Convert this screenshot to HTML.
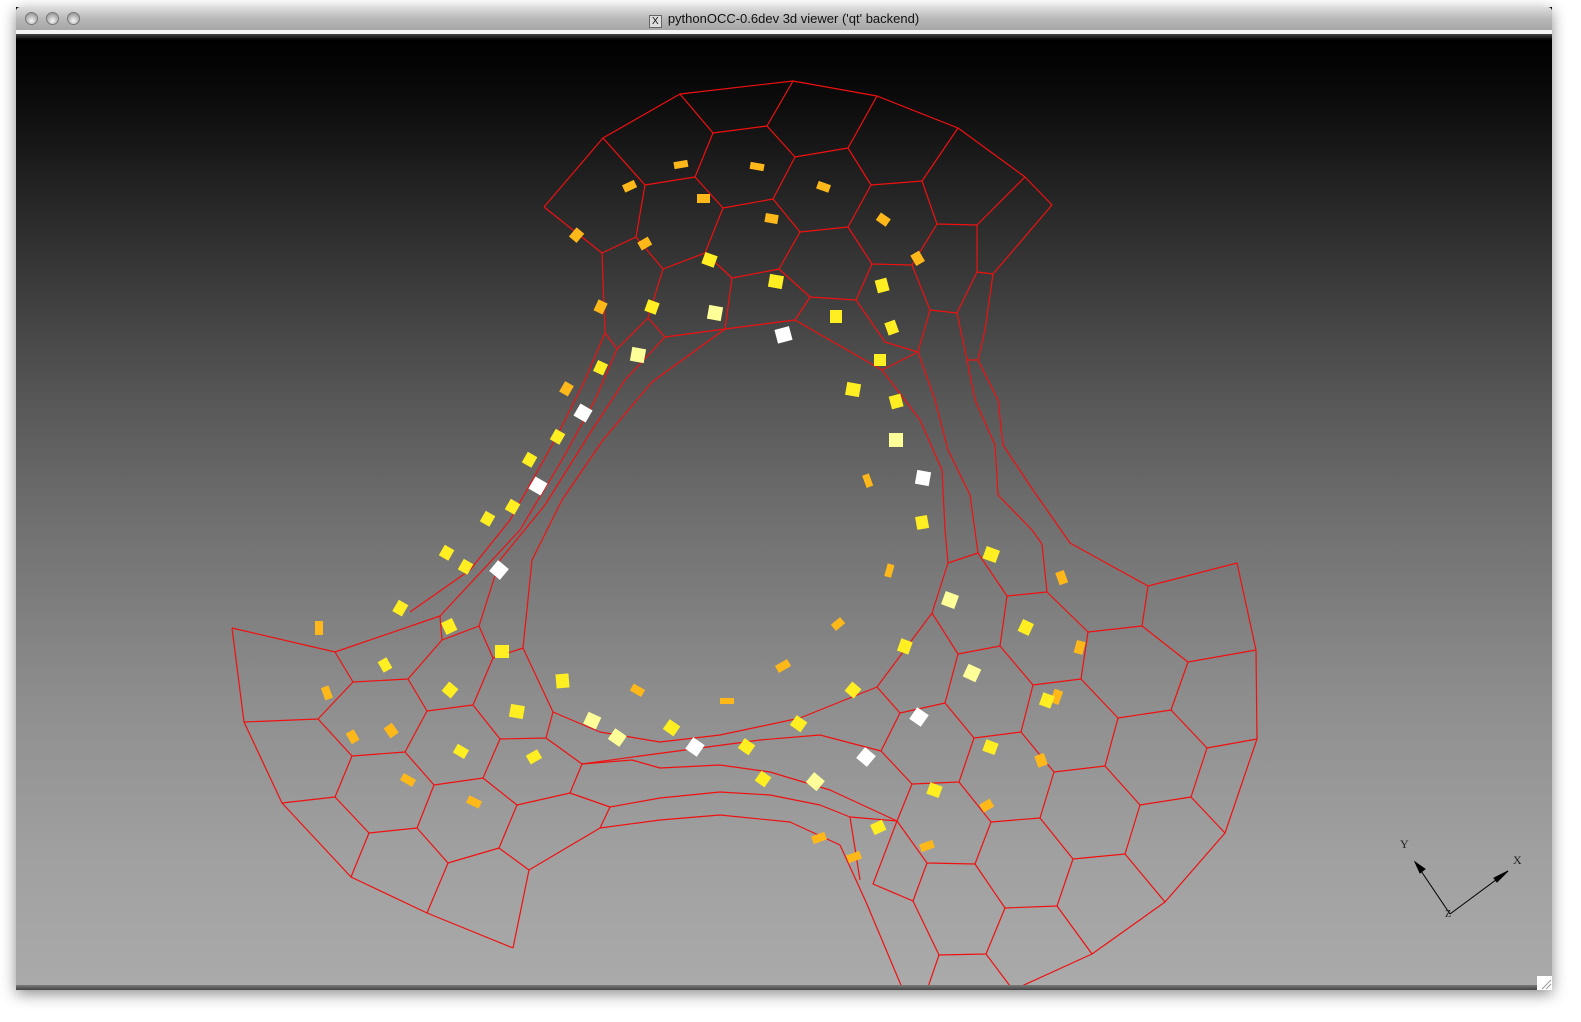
<!DOCTYPE html>
<html><head><meta charset="utf-8">
<style>
html,body{margin:0;padding:0;background:#fff;width:1581px;height:1022px;overflow:hidden;font-family:"Liberation Sans",sans-serif}
#win{position:absolute;left:16px;top:7px;width:1536px;height:983px;box-shadow:0 4px 14px rgba(0,0,0,.45);background:#000}
#tb{position:absolute;left:0;top:0;width:1536px;height:23px;background:linear-gradient(#dedede,#b9b9b9 50%,#a6a6a6);border-radius:4px 4px 0 0}
#wl{position:absolute;left:0;top:23px;width:1536px;height:4px;background:#f4f4f4}
#ds{position:absolute;left:0;top:27px;width:1536px;height:6px;background:linear-gradient(#444,#000)}
.btn{position:absolute;top:5px;width:13px;height:13px;border-radius:50%;background:radial-gradient(circle at 50% 70%,#f6f6f6,#b4b4b4 55%,#8a8a8a);border:1px solid #777;box-sizing:border-box}
#title{position:absolute;left:0;width:1536px;top:4px;text-align:center;font-size:13px;color:#111;font-family:"Liberation Sans","DejaVu Sans",sans-serif}
#vp{position:absolute;left:0;top:33px;width:1536px;height:945px;background:linear-gradient(#000 0%,#0b0b0b 6%,#262626 17%,#3f3f3f 27.5%,#575757 38%,#727272 52%,#8e8e8e 70%,#a0a0a0 86%,#aaa 100%)}
#bb{position:absolute;left:0;top:978px;width:1536px;height:5px;background:linear-gradient(#7a7a7a,#444)}
svg{position:absolute;left:0;top:0}
</style></head><body>
<div id="win">
<div id="tb">
<div class="btn" style="left:9px"></div><div class="btn" style="left:30px"></div><div class="btn" style="left:51px"></div>
<div id="title"><span style="display:inline-block;width:11px;height:11px;border:1px solid #666;background:#ddd;font-size:10px;line-height:11px;vertical-align:-1px;margin-right:6px">X</span>pythonOCC-0.6dev 3d viewer ('qt' backend)</div>
</div>
<div id="wl"></div><div id="ds"></div>
<div id="vp"></div>
<div id="bb"></div>
</div>
<svg width="1581" height="1022" viewBox="0 0 1581 1022">
<defs><clipPath id="c"><rect x="16" y="40" width="1536" height="945"/></clipPath></defs>
<g clip-path="url(#c)" fill="none" stroke="#f01010" stroke-width="1.2" stroke-linejoin="round">
<!-- left lobe -->
<polyline points="232,628 335,652 440,616"/>
<polyline points="232,628 244,722 282,803 351,877 427,913 513,948"/>
<polyline points="335,652 353,682 408,679 442,640 440,616"/>
<polyline points="442,640 479,626 493,658 473,705 427,711 408,679"/>
<polyline points="353,682 318,719 244,722"/>
<polyline points="318,719 352,756 405,752 427,711"/>
<polyline points="405,752 434,785 483,778 500,739 473,705"/>
<polyline points="493,658 523,648 553,712 546,738 500,739"/>
<polyline points="546,738 582,764 632,760"/>
<polyline points="352,756 335,797 282,803"/>
<polyline points="335,797 369,833 417,828 434,785"/>
<polyline points="483,778 517,805 570,793 582,764"/>
<polyline points="570,793 610,807"/>
<polyline points="417,828 448,863 499,848 517,805"/>
<polyline points="499,848 529,870 600,828 610,807"/>
<polyline points="369,833 351,877"/><polyline points="448,863 427,913"/><polyline points="529,870 513,948"/>
<!-- top cap -->
<polyline points="544,207 603,138 680,94 793,81 877,96 958,128 1025,177 1052,205 993,274"/>
<polyline points="680,94 713,133 767,126 793,81"/>
<polyline points="767,126 795,157 848,148 877,96"/>
<polyline points="848,148 871,185 922,181 958,128"/>
<polyline points="922,181 937,224 977,225 1025,177"/>
<polyline points="603,138 645,185 695,177 713,133"/>
<polyline points="695,177 723,208 773,199 795,157"/>
<polyline points="773,199 800,232 848,227 871,185"/>
<polyline points="848,227 872,264 912,265 937,224"/>
<polyline points="544,207 602,253 636,237 645,185"/>
<polyline points="636,237 663,269 705,253 723,208"/>
<polyline points="705,253 732,278 779,269 800,232"/>
<polyline points="779,269 810,297 856,300 872,264"/>
<polyline points="912,265 930,310 957,313 977,272 977,225"/>
<polyline points="977,272 993,274"/>
<polyline points="856,300 885,342 918,352 930,310"/>
<polyline points="810,297 795,320 725,329 732,278"/>
<polyline points="725,329 665,337 648,318 663,269"/>
<polyline points="648,318 617,349 605,333 602,253"/>
<!-- left arm -->
<polyline points="605,333 585,380 555,440 510,520 470,570 410,612"/>
<polyline points="617,349 595,400 562,460 520,530 440,616"/>
<polyline points="665,337 625,380 592,430 545,505 500,560 479,626"/>
<polyline points="725,329 652,382 603,440 562,500 532,560 523,648"/>
<!-- right arm -->
<polyline points="795,320 882,370 918,352"/>
<polyline points="882,370 920,420 942,470 945,530 948,563"/>
<polyline points="918,352 935,400 948,450 970,495 978,553"/>
<polyline points="957,313 967,360 975,400 995,445 998,495 1032,530 1042,544"/>
<polyline points="967,360 978,360 998,400 1003,445 1033,490 1070,543"/>
<polyline points="993,274 985,330 978,360"/>
<!-- right lobe -->
<polyline points="1070,543 1148,586 1237,563 1256,650 1257,739 1225,833 1165,902 1092,954 1013,990"/>
<polyline points="1042,544 1047,592 1088,632 1142,626 1148,586"/>
<polyline points="1142,626 1188,662 1256,650"/>
<polyline points="1047,592 1007,596 978,553 948,563"/>
<polyline points="1007,596 1000,646 1033,685 1081,679 1088,632"/>
<polyline points="1081,679 1118,718 1171,710 1188,662"/>
<polyline points="1171,710 1207,748 1257,739"/>
<polyline points="932,613 958,654 1000,646"/>
<polyline points="958,654 945,703 974,738 1021,732 1033,685"/>
<polyline points="1021,732 1054,772 1105,766 1118,718"/>
<polyline points="1105,766 1140,805 1191,797 1207,748"/>
<polyline points="1191,797 1225,833"/>
<polyline points="877,687 900,713 945,703"/>
<polyline points="900,713 881,751 912,784 959,782 974,738"/>
<polyline points="959,782 991,822 1040,818 1054,772"/>
<polyline points="1040,818 1073,859 1125,854 1140,805"/>
<polyline points="1125,854 1165,902"/>
<polyline points="912,784 897,821 927,863 975,864 991,822"/>
<polyline points="975,864 1005,908 1057,906 1073,859"/>
<polyline points="1057,906 1092,954"/>
<polyline points="850,817 897,821"/>
<polyline points="897,821 873,884 913,901 927,863"/>
<polyline points="913,901 939,955 986,954 1005,908"/>
<polyline points="986,954 1013,990"/><polyline points="939,955 927,990"/><polyline points="866,902 903,990"/>
<polyline points="948,563 932,613 877,687"/>
<!-- bridge -->
<polyline points="553,712 600,732 660,742 720,735 800,718 877,687"/>
<polyline points="582,764 640,756 700,748 760,740 820,735 881,751"/>
<polyline points="610,807 660,798 720,792 770,795 820,805 850,817"/>
<polyline points="600,828 660,820 720,815 790,822 840,845 866,902"/>
<polyline points="632,760 660,768 720,765 770,772 830,790 897,821"/>
<polyline points="860,880 850,817"/>
</g>
<g stroke="none">
<g fill="#ffb81a">
<rect x="674" y="161" width="14" height="7" transform="rotate(-10 681 165)"/>
<rect x="750" y="163" width="14" height="7" transform="rotate(10 757 167)"/>
<rect x="623" y="182" width="13" height="8" transform="rotate(-25 630 186)"/>
<rect x="697" y="194" width="13" height="9"/>
<rect x="817" y="183" width="13" height="8" transform="rotate(20 824 187)"/>
<rect x="765" y="214" width="13" height="9" transform="rotate(10 771 219)"/>
<rect x="877" y="215" width="12" height="9" transform="rotate(35 883 220)"/>
<rect x="572" y="230" width="10" height="12" transform="rotate(40 578 235)"/>
<rect x="639" y="239" width="12" height="9" transform="rotate(-30 645 244)"/>
<rect x="912" y="252" width="10" height="12" transform="rotate(-30 918 257)"/>
<rect x="596" y="301" width="10" height="12" transform="rotate(25 601 306)"/>
<rect x="562" y="383" width="10" height="12" transform="rotate(30 567 388)"/>
<rect x="864" y="474" width="7" height="13" transform="rotate(-20 868 480)"/>
<rect x="886" y="564" width="7" height="13" transform="rotate(15 889 570)"/>
<rect x="1057" y="571" width="9" height="13" transform="rotate(-20 1062 577)"/>
<rect x="315" y="621" width="8" height="14"/>
<rect x="832" y="620" width="12" height="8" transform="rotate(-40 838 624)"/>
<rect x="1075" y="641" width="9" height="13" transform="rotate(15 1080 648)"/>
<rect x="776" y="662" width="14" height="8" transform="rotate(-30 783 666)"/>
<rect x="631" y="686" width="13" height="8" transform="rotate(30 637 690)"/>
<rect x="323" y="686" width="8" height="13" transform="rotate(-20 328 693)"/>
<rect x="1052" y="690" width="9" height="14" transform="rotate(20 1057 697)"/>
<rect x="720" y="698" width="14" height="6"/>
<rect x="348" y="730" width="9" height="12" transform="rotate(-30 354 736)"/>
<rect x="386" y="724" width="10" height="12" transform="rotate(-35 392 730)"/>
<rect x="1036" y="754" width="10" height="12" transform="rotate(-20 1042 760)"/>
<rect x="401" y="776" width="14" height="8" transform="rotate(30 408 780)"/>
<rect x="981" y="801" width="12" height="9" transform="rotate(-30 987 806)"/>
<rect x="467" y="798" width="14" height="8" transform="rotate(25 474 802)"/>
<rect x="812" y="834" width="14" height="8" transform="rotate(-20 819 838)"/>
<rect x="920" y="842" width="14" height="8" transform="rotate(-20 927 846)"/>
<rect x="847" y="853" width="14" height="8" transform="rotate(-20 854 857)"/>
</g>
<g fill="#ffee22">
<rect x="703" y="254" width="13" height="12" transform="rotate(20 710 260)"/>
<rect x="769" y="275" width="14" height="13" transform="rotate(10 776 281)"/>
<rect x="876" y="279" width="12" height="13" transform="rotate(-15 882 285)"/>
<rect x="646" y="301" width="12" height="12" transform="rotate(20 652 307)"/>
<rect x="830" y="310" width="12" height="13"/>
<rect x="886" y="321" width="11" height="13" transform="rotate(-20 892 327)"/>
<rect x="874" y="354" width="12" height="12"/>
<rect x="595" y="362" width="11" height="12" transform="rotate(25 601 368)"/>
<rect x="846" y="383" width="14" height="13" transform="rotate(10 853 390)"/>
<rect x="890" y="395" width="12" height="13" transform="rotate(-15 896 401)"/>
<rect x="552" y="431" width="11" height="12" transform="rotate(30 558 437)"/>
<rect x="524" y="454" width="11" height="12" transform="rotate(30 530 460)"/>
<rect x="507" y="501" width="11" height="12" transform="rotate(30 513 507)"/>
<rect x="482" y="513" width="11" height="12" transform="rotate(30 488 519)"/>
<rect x="916" y="516" width="12" height="13" transform="rotate(-10 922 522)"/>
<rect x="441" y="547" width="11" height="12" transform="rotate(30 447 553)"/>
<rect x="460" y="561" width="11" height="12" transform="rotate(30 466 567)"/>
<rect x="984" y="548" width="14" height="13" transform="rotate(20 991 555)"/>
<rect x="395" y="602" width="11" height="13" transform="rotate(30 401 608)"/>
<rect x="443" y="620" width="12" height="13" transform="rotate(-25 449 626)"/>
<rect x="1020" y="621" width="12" height="13" transform="rotate(25 1026 627)"/>
<rect x="495" y="645" width="14" height="13"/>
<rect x="899" y="640" width="12" height="13" transform="rotate(20 905 646)"/>
<rect x="380" y="659" width="10" height="12" transform="rotate(-30 385 665)"/>
<rect x="556" y="674" width="13" height="14" transform="rotate(-5 562 681)"/>
<rect x="444" y="684" width="12" height="12" transform="rotate(40 450 690)"/>
<rect x="847" y="684" width="12" height="12" transform="rotate(40 853 690)"/>
<rect x="1041" y="694" width="12" height="13" transform="rotate(20 1047 700)"/>
<rect x="510" y="705" width="14" height="13" transform="rotate(10 517 711)"/>
<rect x="665" y="722" width="13" height="12" transform="rotate(35 672 728)"/>
<rect x="792" y="718" width="13" height="12" transform="rotate(35 799 724)"/>
<rect x="740" y="741" width="13" height="12" transform="rotate(35 747 747)"/>
<rect x="984" y="741" width="13" height="12" transform="rotate(20 990 747)"/>
<rect x="454" y="746" width="13" height="10" transform="rotate(30 460 752)"/>
<rect x="528" y="752" width="13" height="10" transform="rotate(-30 534 758)"/>
<rect x="757" y="773" width="12" height="12" transform="rotate(35 763 779)"/>
<rect x="928" y="784" width="13" height="12" transform="rotate(20 934 790)"/>
<rect x="872" y="822" width="13" height="11" transform="rotate(-25 878 828)"/>
</g>
<g fill="#ffff9a">
<rect x="708" y="306" width="14" height="14" transform="rotate(10 715 313)"/>
<rect x="631" y="348" width="14" height="14" transform="rotate(10 638 355)"/>
<rect x="889" y="433" width="14" height="14"/>
<rect x="943" y="593" width="14" height="14" transform="rotate(20 950 600)"/>
<rect x="965" y="666" width="14" height="14" transform="rotate(25 972 673)"/>
<rect x="585" y="714" width="14" height="13" transform="rotate(25 592 721)"/>
<rect x="610" y="731" width="14" height="13" transform="rotate(35 617 738)"/>
<rect x="808" y="775" width="14" height="13" transform="rotate(40 815 782)"/>
</g>
<g fill="#ffffff">
<rect x="776" y="328" width="15" height="14" transform="rotate(-15 783 335)"/>
<rect x="576" y="406" width="14" height="14" transform="rotate(30 583 413)"/>
<rect x="916" y="471" width="14" height="14" transform="rotate(10 923 478)"/>
<rect x="531" y="479" width="14" height="14" transform="rotate(30 538 486)"/>
<rect x="492" y="563" width="14" height="14" transform="rotate(40 499 570)"/>
<rect x="912" y="710" width="14" height="14" transform="rotate(35 919 717)"/>
<rect x="688" y="740" width="14" height="14" transform="rotate(35 695 747)"/>
<rect x="859" y="750" width="14" height="14" transform="rotate(40 866 757)"/>
</g>
</g>
<!-- axis trihedron -->
<g stroke="#000" stroke-width="1" fill="#000">
<line x1="1450" y1="914" x2="1415" y2="862"/>
<line x1="1450" y1="914" x2="1508" y2="871"/>
<polygon points="1415,862 1425,869 1420,873" />
<polygon points="1508,871 1494,878 1497,882"/>
</g>
<g font-family="Liberation Serif,serif" font-size="12" fill="#222">
<text x="1400" y="848">Y</text><text x="1513" y="864">X</text><text x="1445" y="917" font-size="10">Z</text>
</g>
<!-- resize grip -->
<rect x="1537" y="976" width="15" height="14" fill="#fff"/>
<g stroke="#999" stroke-width="1"><line x1="1542" y1="989" x2="1551" y2="980"/><line x1="1546" y1="989" x2="1551" y2="984"/></g>
</svg>
</body></html>
